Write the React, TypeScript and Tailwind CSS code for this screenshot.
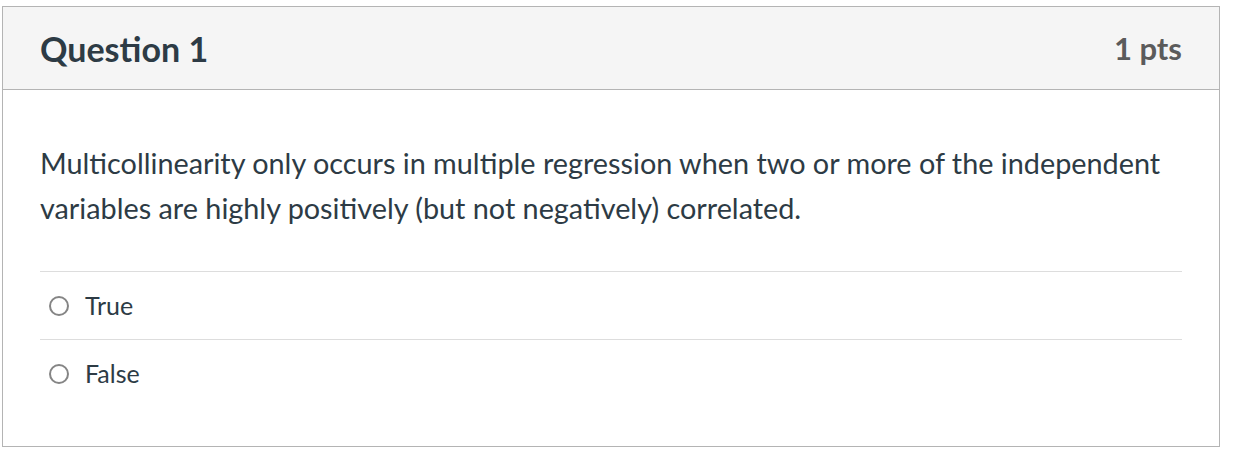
export default function App() {
  const answers = ["True", "False"];
  return (
    <div className="bg-white pl-[2px] pt-[6px] w-[1234px] h-[452px]" style={{ fontFamily: "Lato, 'Noto Sans', sans-serif" }}>
      <div className="w-[1218px] h-[441px] border border-[#b4b4b4] flex flex-col">
        <div className="h-[83px] shrink-0 bg-[#f5f5f5] border-b border-[#b4b4b4] flex items-center justify-between pl-[37px] pr-[37px]">
          <h2 className="text-[34px] font-bold text-[#2d3b45]">Question 1</h2>
          <span className="text-[31px] font-bold text-[#5b5b5b]">1 pts</span>
        </div>
        <div className="px-[37px] pt-[51px]">
          <p className="text-[28.8px] leading-[45px] text-[#2d3b45]">
            Multicollinearity only occurs in multiple regression when two or more of the independent variables are highly positively (but not negatively) correlated.
          </p>
          <div className="mt-[40px] border-t border-[#dddddd]">
            {answers.map((a, i) => (
              <div key={a} className={`h-[68px] flex items-center pl-[9px] ${i === 0 ? "border-b border-[#dddddd]" : ""}`}>
                <span className="w-[20px] h-[20px] rounded-full border-2 border-[#858585] bg-white" />
                <span className="ml-[16px] text-[25px] text-[#2d3b45]">{a}</span>
              </div>
            ))}
          </div>
        </div>
      </div>
    </div>
  );
}
